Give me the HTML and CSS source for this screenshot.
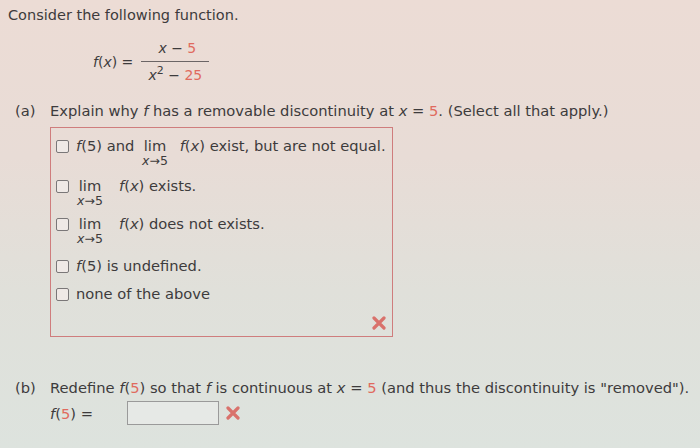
FILE: index.html
```html
<!DOCTYPE html>
<html>
<head>
<meta charset="utf-8">
<link rel="stylesheet" href="styles.css">
</head>
<body>
<div class="page">
  <div class="title">Consider the following function.</div>
  <div class="formula">
    <span class="fx"><i>f</i>(<i>x</i>) =</span>
    <span class="frac">
      <span class="num"><i>x</i> − <span class="red">5</span></span>
      <span class="den"><i>x</i><sup>2</sup> − <span class="red">25</span></span>
    </span>
  </div>
  <div class="part part-a">
    <span class="label">(a)</span>
    <div class="content">
      <div class="question">Explain why <i>f</i> has a removable discontinuity at <i>x</i> = <span class="red">5</span>. (Select all that apply.)</div>
      <div class="box">
        <div class="opt opt1">
          <span class="cb"></span>
          <span class="txt"><i>f</i>(5) and <span class="lim"><span class="lim-top">lim</span><span class="lim-sub"><i>x</i>→5</span></span> <i>f</i>(<i>x</i>) exist, but are not equal.</span>
        </div>
        <div class="opt opt2">
          <span class="cb"></span>
          <span class="txt"><span class="lim lead"><span class="lim-top">lim</span><span class="lim-sub"><i>x</i>→5</span></span><span class="after"><i>f</i>(<i>x</i>) exists.</span></span>
        </div>
        <div class="opt opt3">
          <span class="cb"></span>
          <span class="txt"><span class="lim lead"><span class="lim-top">lim</span><span class="lim-sub"><i>x</i>→5</span></span><span class="after"><i>f</i>(<i>x</i>) does not exists.</span></span>
        </div>
        <div class="opt opt4">
          <span class="cb"></span>
          <span class="txt"><i>f</i>(5) is undefined.</span>
        </div>
        <div class="opt opt5">
          <span class="cb"></span>
          <span class="txt">none of the above</span>
        </div>
        <div class="mark-row">
          <svg class="xmark" width="14" height="14" viewBox="0 0 14 14"><path d="M2 2 L12 12 M12 2 L2 12" stroke="#d9726c" stroke-width="3.2" stroke-linecap="round"/></svg>
        </div>
      </div>
    </div>
  </div>
  <div class="part part-b">
    <span class="label">(b)</span>
    <div class="content">
      <div class="question">Redefine <i>f</i>(<span class="red">5</span>) so that <i>f</i> is continuous at <i>x</i> = <span class="red">5</span> (and thus the discontinuity is "removed").</div>
      <div class="answer">
        <span class="ans-label"><i>f</i>(<span class="red">5</span>) =</span>
        <span class="input"></span>
        <svg class="xmark" width="14" height="14" viewBox="0 0 14 14"><path d="M2 2 L12 12 M12 2 L2 12" stroke="#d9726c" stroke-width="3.2" stroke-linecap="round"/></svg>
      </div>
    </div>
  </div>
</div>
</body>
</html>
```
FILE: styles.css
```css
html, body {
  margin: 0;
  padding: 0;
}
body {
  width: 700px;
  height: 448px;
  overflow: hidden;
  background: linear-gradient(180deg, #ecdcd5 0%, #e8dcd6 35%, #e0e0da 65%, #dde3de 100%);
  font-family: "DejaVu Sans", Verdana, sans-serif;
  font-size: 14.7px;
  color: #3d3b3c;
}
.page {
  padding: 7px 0 0 8px;
}
.title {
  font-size: 14.5px;
  line-height: 17px;
}
.red { color: #e06a5e; }
i { font-style: italic; }
.formula {
  display: flex;
  align-items: center;
  margin: 16px 0 0 85px;
}
.fx {
  margin-right: 8px;
  font-size: 14px;
}
.frac {
  display: inline-flex;
  flex-direction: column;
  align-items: center;
  font-size: 14px;
}
.num {
  padding: 0 4px 4px 8px;
  border-bottom: 1px solid #6b6566;
  width: 56px;
  text-align: center;
  line-height: 17px;
}
.den {
  line-height: 17px;
  padding-top: 5px;
}
.den sup {
  font-size: 11px;
  line-height: 0;
  vertical-align: 6px;
}
.part {
  display: flex;
}
.part-a {
  margin-top: 18px;
}
.label {
  width: 42px;
  padding-left: 7px;
  box-sizing: border-box;
  line-height: 17px;
}
.content {
  display: flex;
  flex-direction: column;
}
.question {
  line-height: 17px;
}
.box {
  margin-top: 8px;
  width: 343px;
  height: 210px;
  box-sizing: border-box;
  border: 1px solid #cf7d7d;
  padding: 9px 0 0 5px;
  display: flex;
  flex-direction: column;
}
.opt {
  display: flex;
  align-items: flex-start;
}
.cb {
  width: 11px;
  height: 11px;
  border: 1px solid #7a7778;
  border-radius: 2px;
  margin-right: 7px;
  margin-top: 3px;
  flex: none;
  background: #efe9e6;
}
.txt {
  line-height: 17px;
}
.lim {
  display: inline-flex;
  flex-direction: column;
  align-items: center;
  vertical-align: top;
  width: 32px;
  margin: 0 4px 0 0;
}
.lim-top { line-height: 17px; }
.lim-sub {
  font-size: 12.5px;
  line-height: 13px;
  white-space: nowrap;
}
.lim.lead {
  margin: 0 13px 0 -2px;
}
.opt2 { margin-top: 10px; }
.opt3 { margin-top: 8px; }
.opt4 { margin-top: 12px; }
.opt5 { margin-top: 11px; }
.mark-row {
  margin-top: 14px;
  display: flex;
  justify-content: flex-end;
  padding-right: 6px;
}
.part-b {
  margin-top: 42px;
}
.answer {
  display: flex;
  align-items: center;
  margin-top: 5px;
}
.ans-label {
  width: 77px;
  line-height: 17px;
}
.input {
  width: 90px;
  height: 22px;
  border: 1px solid #9a9a9a;
  background: #e6e9e6;
  margin-right: 7px;
}
```
